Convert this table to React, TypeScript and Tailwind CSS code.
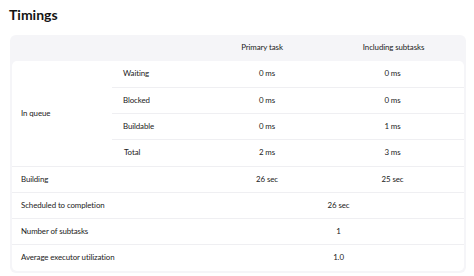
import React from "react";

const cell = "h-[26px] flex items-center border-b border-[#efeff2]";

export default function App() {
  return (
    <div
      className="w-[474px] h-[276px] bg-white text-[#222222] px-[10px] pt-[5px]"
      style={{ fontFamily: "Lato, sans-serif" }}
    >
      <h1 className="text-[14px] font-bold leading-[20px] -ml-[1px] text-[#141414]">Timings</h1>
      <div className="mt-[10px] w-[456px] rounded-[6px] bg-[#f5f5f8] px-[2px] pb-[2px] text-[7.9px] tracking-[-0.1px]">
        <div className="grid grid-cols-[100px_101px_108px_143px] h-[26px] items-center">
          <div />
          <div />
          <div className="text-center pr-[10px]">Primary task</div>
          <div className="text-center pl-[2px]">Including subtasks</div>
        </div>
        <div className="grid grid-cols-[100px_101px_108px_143px] bg-white rounded-[5px]">
          <div className="row-span-4 flex items-center pl-[9px] border-b border-[#efeff2]">In queue</div>
          <div className={`${cell} h-[27px] pl-[11px]`}>Waiting</div>
          <div className={`${cell} h-[27px] justify-center`}>0 ms</div>
          <div className={`${cell} h-[27px] justify-center`}>0 ms</div>
          <div className={`${cell} pl-[11px]`}>Blocked</div>
          <div className={`${cell} justify-center`}>0 ms</div>
          <div className={`${cell} justify-center`}>0 ms</div>
          <div className={`${cell} pl-[11px]`}>Buildable</div>
          <div className={`${cell} justify-center`}>0 ms</div>
          <div className={`${cell} justify-center`}>1 ms</div>
          <div className={`${cell} h-[27px] pl-[12px]`}>Total</div>
          <div className={`${cell} h-[27px] justify-center`}>2 ms</div>
          <div className={`${cell} h-[27px] justify-center`}>3 ms</div>

          <div className={`${cell} col-span-2 pl-[9px]`}>Building</div>
          <div className={`${cell} justify-center`}>26 sec</div>
          <div className={`${cell} justify-center`}>25 sec</div>

          <div className={`${cell} col-span-2 pl-[9px]`}>Scheduled to completion</div>
          <div className={`${cell} col-span-2 justify-center`}>26 sec</div>

          <div className={`${cell} col-span-2 pl-[9px]`}>Number of subtasks</div>
          <div className={`${cell} col-span-2 justify-center`}>1</div>

          <div className="h-[26px] flex items-center col-span-2 pl-[9px]">Average executor utilization</div>
          <div className="h-[26px] flex items-center col-span-2 justify-center">1.0</div>
        </div>
      </div>
    </div>
  );
}
